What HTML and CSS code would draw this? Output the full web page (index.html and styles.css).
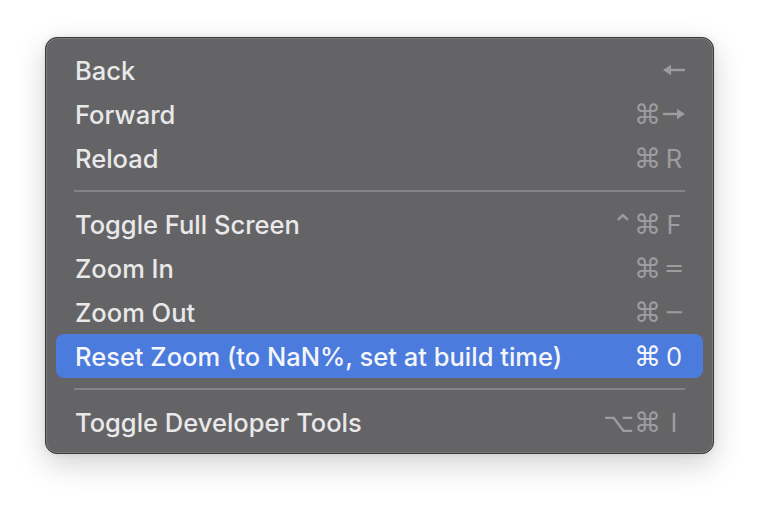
FILE: index.html
```html
<!DOCTYPE html>
<html>
<head>
<meta charset="utf-8">
<link rel="stylesheet" href="styles.css">
</head>
<body>
<div class="menu">
  <div class="item"><span class="label">Back</span><span class="sc"><span class="mods"></span><span class="key"><svg class="arrow" viewBox="0 0 22 12" width="22" height="12"><rect x="6" y="4.8" width="16" height="2.4" fill="currentColor"/><polygon points="0,6 8,0.8 8,11.2" fill="currentColor"/></svg></span></span></div>
  <div class="item"><span class="label">Forward</span><span class="sc"><span class="mods">⌘</span><span class="key"><svg class="arrow" viewBox="0 0 22 12" width="22" height="12"><rect x="0" y="4.8" width="16" height="2.4" fill="currentColor"/><polygon points="22,6 14,0.8 14,11.2" fill="currentColor"/></svg></span></span></div>
  <div class="item"><span class="label">Reload</span><span class="sc"><span class="mods">⌘</span><span class="key">R</span></span></div>
  <div class="sep"></div>
  <div class="item"><span class="label">Toggle Full Screen</span><span class="sc"><span class="mods">⌃⌘</span><span class="key">F</span></span></div>
  <div class="item"><span class="label">Zoom In</span><span class="sc"><span class="mods">⌘</span><span class="key sym">=</span></span></div>
  <div class="item"><span class="label">Zoom Out</span><span class="sc"><span class="mods">⌘</span><span class="key sym">−</span></span></div>
  <div class="item active"><span class="label">Reset Zoom (to NaN%, set at build time)</span><span class="sc"><span class="mods">⌘</span><span class="key">0</span></span></div>
  <div class="sep"></div>
  <div class="item"><span class="label">Toggle Developer Tools</span><span class="sc"><span class="mods">⌥⌘</span><span class="key">I</span></span></div>
</div>
</body>
</html>
```
FILE: styles.css
```css
html, body {
  margin: 0;
  background: #ffffff;
}
body {
  min-height: 508px;
  box-sizing: border-box;
  padding: 37px 0 0 45px;
  font-family: Inter, "Noto Sans", "DejaVu Sans", sans-serif;
}
.menu {
  box-sizing: border-box;
  width: 669px;
  height: 417px;
  background: #646467;
  border: 1px solid #38383a;
  border-radius: 12px;
  box-shadow: inset 0 0 0 1px #7b7b7e, 0 10px 30px rgba(0, 0, 0, 0.18), 0 0 6px rgba(0, 0, 0, 0.08);
  padding: 10px 10px 10px 10px;
}
.item {
  height: 44px;
  display: flex;
  align-items: center;
  justify-content: space-between;
  padding: 0 18px 0 19px;
  border-radius: 8px;
  font-size: 25.5px;
  font-weight: 450;
  color: #e9e9ea;
}
.item.active {
  background: #4b7bdd;
  color: #f4f6fb;
}
.sc {
  display: flex;
  align-items: center;
  color: #9d9da0;
  font-weight: 400;
}
.active .sc {
  color: #f4f6fb;
}
.mods {
  font-family: "DejaVu Sans", sans-serif;
  font-size: 27px;
  font-weight: 400;
  text-align: right;
}
.key {
  width: 22px;
  margin-left: 2px;
  text-align: center;
  display: flex;
  justify-content: center;
  align-items: center;
}
.sym {
  font-family: "DejaVu Sans", sans-serif;
  font-size: 24px;
}
.arrow {
  display: block;
}
.sep {
  height: 2px;
  margin: 10px 18px;
  background: #838386;
}
```
